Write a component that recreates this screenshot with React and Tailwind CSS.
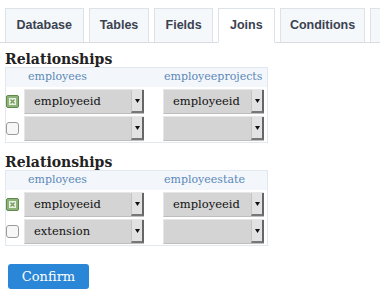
import React from "react";

const serif = { fontFamily: '"DejaVu Serif", serif' };

const tabs = [
  { label: "Database", w: "w-[82px]" },
  { label: "Tables", w: "w-[63px]" },
  { label: "Fields", w: "w-[61px]" },
  { label: "Joins", w: "w-[59px]", active: true },
  { label: "Conditions", w: "w-[89px]" },
];

const CheckBox = ({ checked }) =>
  checked ? (
    <div className="w-[13px] h-[13px] rounded-[2px] border border-[#5e8a4a] bg-[#8fb27a] flex items-center justify-center">
      <svg width="7" height="7" viewBox="0 0 7 7">
        <rect x="0" y="0" width="7" height="7" fill="#e9f2e2" />
        <path d="M1.5 1.5 L5.5 5.5 M5.5 1.5 L1.5 5.5" stroke="#6f9a58" strokeWidth="1.3" />
      </svg>
    </div>
  ) : (
    <div className="w-[13px] h-[13px] rounded-[3px] border border-[#9a9a9a] bg-[#f7f7f7]" />
  );

const Select = ({ value, w }) => (
  <div className={`${w} h-[25px] flex bg-[#d4d4d4] border-t border-l border-[#e6e6e6] border-b border-b-[#bdbdbd]`}>
    <div className="flex-1 flex items-center pl-[9px] text-[11.5px] text-[#111]">{value}</div>
    <div className="w-[13px] h-full bg-[#e2e2e2] border-l border-[#c4c4c4] border-r-2 border-r-[#666] border-b-2 border-b-[#777] flex items-center justify-center">
      <svg width="5" height="4" viewBox="0 0 5 4">
        <path d="M0 0 H5 L2.5 4 Z" fill="#111" />
      </svg>
    </div>
  </div>
);

const Relationship = ({ left, right, rows }) => (
  <div>
    <div className="text-[14px] font-bold text-[#222] leading-[15px] pl-[5px]">Relationships</div>
    <div className="ml-[5px] w-[263px] border border-[#e1e8f0]">
      <div className="h-[19px] bg-[#f3f7fc] flex items-center text-[11px] text-[#5b87b6]">
        <div className="w-[22px]" />
        <div className="w-[136px]">{left}</div>
        <div>{right}</div>
      </div>
      <div className="flex flex-col gap-[2px] pt-[2px] pb-[1px]">
        {rows.map((r, i) => (
          <div key={i} className="flex items-center">
            <div className="w-[18px] flex justify-end pr-[5px]">
              <div className="ml-[1px]"><CheckBox checked={r.checked} /></div>
            </div>
            <Select value={r.a} w="w-[120px]" />
            <div className="w-[19px]" />
            <Select value={r.b} w="w-[101px]" />
          </div>
        ))}
      </div>
    </div>
  </div>
);

export default function App() {
  return (
    <div className="w-[380px] h-[297px] bg-white overflow-hidden" style={serif}>
      <div className="pt-[9px] flex items-end border-b border-[#d9dde2] h-[43px]">
        <div className="w-[5px]" />
        {tabs.map((t) => (
          <div
            key={t.label}
            className={`${t.w} h-[34px] mr-[5px] flex items-center justify-center border border-[#dde2e8] text-[12.5px] font-bold text-[#3b4250] ${
              t.active ? "bg-white border-b-white -mb-px h-[35px]" : "bg-[#f5f8fb] border-b-0"
            }`}
            style={{ fontFamily: '"Liberation Sans", Arial, sans-serif' }}
          >
            {t.label}
          </div>
        ))}
        <div className="h-[34px] w-[10px] border-l border-t border-[#dde2e8] bg-[#f5f8fb]" />
      </div>
      <div className="pt-[9px]">
        <Relationship
          left="employees"
          right="employeeprojects"
          rows={[
            { checked: true, a: "employeeid", b: "employeeid" },
            { checked: false, a: "", b: "" },
          ]}
        />
        <div className="h-[12px]" />
        <Relationship
          left="employees"
          right="employeestate"
          rows={[
            { checked: true, a: "employeeid", b: "employeeid" },
            { checked: false, a: "extension", b: "" },
          ]}
        />
        <div className="pl-[8px] pt-[18px]">
          <button className="w-[81px] h-[25px] rounded-[3px] bg-[#2a86d6] text-white text-[13px]">
            Confirm
          </button>
        </div>
      </div>
    </div>
  );
}
